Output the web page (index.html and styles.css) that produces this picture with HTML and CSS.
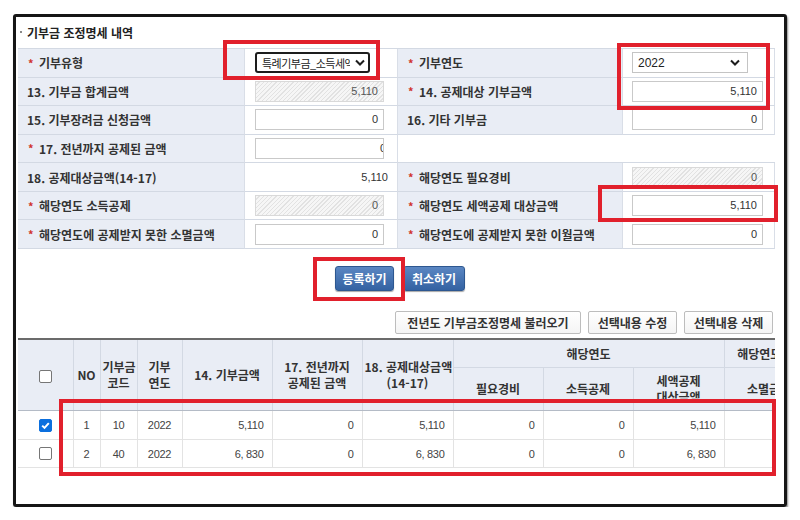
FILE: index.html
```html
<!DOCTYPE html>
<html lang="ko">
<head>
<meta charset="utf-8">
<title>기부금 조정명세 내역</title>
<link rel="stylesheet" href="styles.css">
</head>
<body>
<div class="frame">
  <div class="title"><span class="dot"></span>기부금 조정명세 내역</div>

  <div class="form">
    <div class="lbl"><span class="req">*</span>기부유형</div>
    <div class="val"><div class="sel focus"><span class="sel-text">특례기부금_소득세액공제</span><svg class="chev" width="10" height="7" viewBox="0 0 10 7"><path d="M1 1.5l4 4 4-4" stroke="#1d1d1d" stroke-width="2" fill="none"/></svg></div></div>
    <div class="lbl"><span class="req">*</span>기부연도</div>
    <div class="val v2"><div class="sel year"><span class="sel-text">2022</span><svg class="chev" width="10" height="7" viewBox="0 0 10 7"><path d="M1 1.5l4 4 4-4" stroke="#1d1d1d" stroke-width="2" fill="none"/></svg></div></div>

    <div class="lbl">13. 기부금 합계금액</div>
    <div class="val"><div class="inp ro">5,110</div></div>
    <div class="lbl"><span class="req">*</span>14. 공제대상 기부금액</div>
    <div class="val v2"><div class="inp">5,110</div></div>

    <div class="lbl">15. 기부장려금 신청금액</div>
    <div class="val"><div class="inp">0</div></div>
    <div class="lbl">16. 기타 기부금</div>
    <div class="val v2"><div class="inp">0</div></div>

    <div class="lbl"><span class="req">*</span>17. 전년까지 공제된 금액</div>
    <div class="val"><div class="inp cutbox"><span class="cut">0</span></div></div>
    <div class="blank"></div>
    <div class="blank last"></div>

    <div class="lbl">18. 공제대상금액(14-17)</div>
    <div class="val plain">5,110</div>
    <div class="lbl"><span class="req">*</span>해당연도 필요경비</div>
    <div class="val v2"><div class="inp ro">0</div></div>

    <div class="lbl"><span class="req">*</span>해당연도 소득공제</div>
    <div class="val"><div class="inp ro">0</div></div>
    <div class="lbl"><span class="req">*</span>해당연도 세액공제 대상금액</div>
    <div class="val v2"><div class="inp">5,110</div></div>

    <div class="lbl"><span class="req">*</span>해당연도에 공제받지 못한 소멸금액</div>
    <div class="val"><div class="inp">0</div></div>
    <div class="lbl"><span class="req">*</span>해당연도에 공제받지 못한 이월금액</div>
    <div class="val v2"><div class="inp">0</div></div>
  </div>

  <div class="actions">
    <button class="btn-primary reg">등록하기</button>
    <button class="btn-primary cancel">취소하기</button>
  </div>

  <div class="tools">
    <button class="btn-sub wide">전년도 기부금조정명세 불러오기</button>
    <button class="btn-sub">선택내용 수정</button>
    <button class="btn-sub">선택내용 삭제</button>
  </div>

  <div class="gwrap">
    <table class="grid">
      <colgroup>
        <col class="w55"><col class="w27"><col class="w37"><col class="w45">
        <col class="w90"><col class="w90"><col class="w91"><col class="w90">
        <col class="w90"><col class="w91"><col class="w90"><col class="w90">
      </colgroup>
      <thead>
        <tr class="h1">
          <th rowspan="2"><span class="cb"></span></th>
          <th rowspan="2">NO</th>
          <th rowspan="2">기부금<br>코드</th>
          <th rowspan="2">기부<br>연도</th>
          <th rowspan="2">14. 기부금액</th>
          <th rowspan="2">17. 전년까지<br>공제된 금액</th>
          <th rowspan="2">18. 공제대상금액<br>(14-17)</th>
          <th colspan="3">해당연도</th>
          <th colspan="2">해당연도에 공제받지 못한 금액</th>
        </tr>
        <tr class="h2">
          <th>필요경비</th>
          <th>소득공제</th>
          <th>세액공제<br>대상금액</th>
          <th>소멸금액</th>
          <th>이월금액</th>
        </tr>
      </thead>
      <tbody>
        <tr>
          <td class="c"><span class="cb on"><svg width="11" height="11" viewBox="0 0 11 11"><path d="M2.2 5.6l2.3 2.3 4.3-4.8" stroke="#fff" stroke-width="2" fill="none"/></svg></span></td>
          <td class="c">1</td><td class="c">10</td><td class="c">2022</td>
          <td>5,110</td><td>0</td><td>5,110</td><td>0</td><td>0</td><td>5,110</td><td>0</td><td>0</td>
        </tr>
        <tr>
          <td class="c"><span class="cb"></span></td>
          <td class="c">2</td><td class="c">40</td><td class="c">2022</td>
          <td>6, 830</td><td>0</td><td>6, 830</td><td>0</td><td>0</td><td>6, 830</td><td>0</td><td>0</td>
        </tr>
      </tbody>
    </table>
  </div>
</div>

<div class="mark m1"></div>
<div class="mark m2"></div>
<div class="mark m3"></div>
<div class="mark m4"></div>
<div class="mark m5"></div>
</body>
</html>
```

FILE: styles.css
```css
* { box-sizing: border-box; }

body {
  margin: 0;
  background: #ffffff;
  font-family: "Noto Sans CJK KR", "Noto Sans", sans-serif;
  color: #333;
}

.frame {
  margin: 14px 0 0 13px;
  width: 774px;
  height: 493px;
  border: 3px solid #161616;
  border-radius: 3px;
  box-shadow: 1px 2px 2px rgba(0, 0, 0, 0.45);
  padding: 0 9px 0 2px;
}

.title {
  height: 31px;
  display: flex;
  align-items: center;
  padding-left: 2px;
  font-size: 12px;
  font-weight: 700;
  color: #222;
}

.dot {
  width: 2px;
  height: 2px;
  background: #8a8a8a;
  margin-right: 5px;
  margin-top: -1px;
}

/* ---------- form ---------- */
.form {
  display: grid;
  grid-template-columns: 227px 153px 225px 152px;
  grid-template-rows: repeat(7, 28.57px);
  border-top: 1px solid #d3d9e3;
}

.lbl {
  background: #e9edf5;
  border-bottom: 1px solid #d3d9e3;
  border-right: 1px solid #d9dee7;
  display: flex;
  align-items: center;
  padding-left: 9px;
  font-size: 12px;
  font-weight: 700;
  color: #333;
  white-space: nowrap;
}

.req {
  display: inline-block;
  width: 11px;
  margin-left: 1px;
  color: #d0342c;
  font-size: 11px;
}

.val {
  background: #fff;
  border-bottom: 1px solid #d3d9e3;
  border-right: 1px solid #d9dee7;
  display: flex;
  align-items: center;
  padding-left: 10px;
}

.val.v2 { padding-left: 9px; }

.val.plain {
  justify-content: flex-end;
  padding-right: 9px;
  font-family: "Liberation Sans", sans-serif;
  font-size: 11px;
  color: #333;
}

.blank {
  background: #fff;
  border-bottom: 1px solid #d3d9e3;
}

.inp {
  width: 129px;
  height: 21px;
  border: 1px solid #c9c9c9;
  background: #fff;
  font-family: "Liberation Sans", sans-serif;
  font-size: 11px;
  line-height: 19px;
  color: #333;
  text-align: right;
  padding: 0 5px;
  white-space: nowrap;
}

.v2 .inp { width: 131px; }

.inp.ro {
  background: repeating-linear-gradient(135deg, #f6f6f6 0 2px, #e2e2e2 2px 3px);
  border-color: #d9d9d9;
  color: #555;
}

.inp.cutbox {
  padding-right: 2px;
  overflow: hidden;
}
.cut {
  display: inline-block;
  margin-right: -5px;
}

.sel {
  height: 21px;
  display: flex;
  align-items: center;
  justify-content: space-between;
  background: #fff;
  font-size: 11px;
  color: #222;
}

.sel.focus {
  width: 115px;
  border: 2px solid #1d1d1d;
  border-radius: 3px;
  padding: 0 3px 0 5px;
}

.sel.focus .sel-text {
  width: 88px;
  overflow: hidden;
  white-space: nowrap;
  letter-spacing: -0.5px;
}

.sel.year {
  width: 116px;
  border: 1px solid #c4c4c4;
  padding: 0 7px 0 5px;
  font-family: "Liberation Sans", sans-serif;
  font-size: 12px;
}

.chev { flex: none; }

/* ---------- buttons ---------- */
.actions {
  display: flex;
  justify-content: center;
  gap: 9px;
  margin-top: 17px;
  padding-left: 7px;
}

.btn-primary {
  height: 25px;
  border: 1px solid #2d5790;
  border-radius: 3px;
  background: linear-gradient(#5a86c2, #3462a2);
  box-shadow: 0 1px 1px rgba(0, 0, 0, 0.35);
  color: #fff;
  font-family: "Noto Sans CJK KR", sans-serif;
  font-size: 12px;
  font-weight: 700;
  padding: 0;
}
.btn-primary.reg { width: 59px; }
.btn-primary.cancel { width: 62px; }

.tools {
  display: flex;
  justify-content: flex-end;
  gap: 7px;
  margin-top: 20px;
  padding-right: 2px;
}

.btn-sub {
  width: 89px;
  height: 23px;
  border: 1px solid #bdbdbd;
  border-radius: 2px;
  background: linear-gradient(#ffffff, #f4f4f4);
  color: #333;
  font-family: "Noto Sans CJK KR", sans-serif;
  font-size: 12px;
  font-weight: 700;
  padding: 0;
}
.btn-sub.wide { width: 186px; }

/* ---------- grid ---------- */
.gwrap {
  margin-top: 4px;
  width: 757px;
  overflow: hidden;
  border-top: 2px solid #6b6b6b;
}

.grid {
  border-collapse: collapse;
  table-layout: fixed;
  width: 886px;
}

.w55 { width: 55px; }
.w27 { width: 27px; }
.w37 { width: 37px; }
.w45 { width: 45px; }
.w90 { width: 90px; }
.w91 { width: 91px; }

.grid th {
  background: #e9edf5;
  border: 1px solid #d3d9e3;
  border-top: 0;
  font-size: 12px;
  font-weight: 700;
  color: #333;
  line-height: 16px;
  padding: 0 2px;
  white-space: nowrap;
  text-align: center;
}

.grid th:first-child,
.grid td:first-child { border-left: 0; }

.grid tr.h1 th { height: 28px; }
.grid tr.h2 th { height: 43px; }
.grid tr.h2 th,
.grid tr.h1 th[rowspan] { border-bottom: 1px solid #b4bbc6; }

.grid td {
  height: 28.5px;
  border: 1px solid #e3e3e3;
  border-top: 0;
  font-family: "Liberation Sans", sans-serif;
  font-size: 11px;
  color: #444;
  text-align: right;
  padding: 0 8px;
  white-space: nowrap;
  letter-spacing: -0.3px;
}

.grid td.c {
  text-align: center;
  padding: 0;
}

.cb {
  display: inline-block;
  width: 13px;
  height: 13px;
  border: 1px solid #767676;
  border-radius: 2px;
  background: #fff;
  vertical-align: middle;
}

.cb.on {
  background: #0b6fde;
  border-color: #0b6fde;
}
.cb.on svg { display: block; margin: 0; }

/* ---------- annotation marks (overlay) ---------- */
.mark {
  position: absolute;
  border: 4px solid #e1202c;
}
.m1 { left: 223px; top: 40px; width: 157px; height: 40px; }
.m2 { left: 617px; top: 43px; width: 153px; height: 67px; }
.m3 { left: 598px; top: 185px; width: 180px; height: 37px; }
.m4 { left: 313px; top: 257px; width: 92px; height: 44px; }
.m5 { left: 59px; top: 399px; width: 717px; height: 77px; }
```
